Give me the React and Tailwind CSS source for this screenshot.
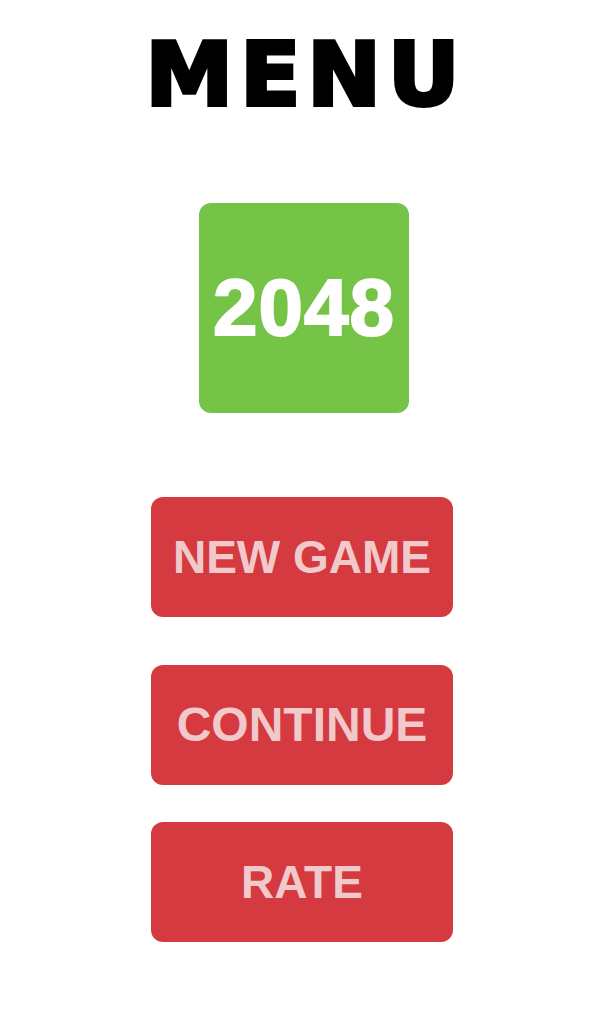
export default function App() {
  const btn =
    'flex h-[120px] w-[302px] items-center justify-center rounded-[12px] bg-[#d43a3f] font-bold leading-none text-[#f2c9cb]';

  return (
    <div
      className="flex min-h-[1024px] w-[600px] flex-col items-center bg-white pl-[4px]"
      style={{ fontFamily: '"Liberation Sans", Arial, sans-serif' }}
    >
      <h1
        className="ml-[8px] mt-[31px] text-[88px] font-bold leading-none tracking-[7px] text-black [-webkit-text-stroke:4px_black]"
        style={{ fontFamily: '"DejaVu Sans", sans-serif' }}
      >
        MENU
      </h1>

      {/* logo tile */}
      <div className="ml-[4px] mt-[84px] flex h-[210px] w-[210px] items-center justify-center rounded-[12px] bg-[#75c347]">
        <span className="text-[80px] font-bold leading-none tracking-[1px] text-white [-webkit-text-stroke:2px_white]">
          2048
        </span>
      </div>

      <button className={`${btn} mt-[84px] text-[46px]`}>NEW GAME</button>
      <button className={`${btn} mt-[48px] text-[48px]`}>CONTINUE</button>
      <button className={`${btn} mt-[37px] text-[46px]`}>RATE</button>
    </div>
  );
}
